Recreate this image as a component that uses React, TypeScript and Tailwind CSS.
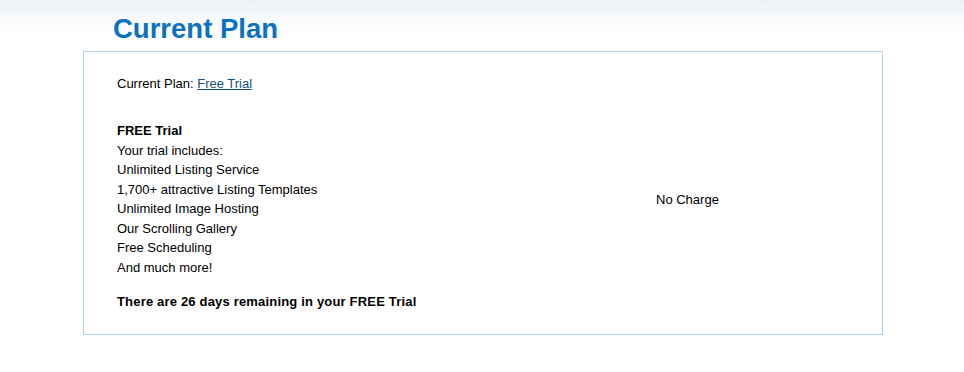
import React from 'react'

const features = [
  'Your trial includes:',
  'Unlimited Listing Service',
  '1,700+ attractive Listing Templates',
  'Unlimited Image Hosting',
  'Our Scrolling Gallery',
  'Free Scheduling',
  'And much more!',
]

export default function App() {
  return (
    <div className="min-h-[372px] bg-[linear-gradient(to_bottom,#eef3f7_0px,#ffffff_34px)] font-['Liberation_Sans',Arial,sans-serif] text-black">
      <h1 className="ml-[113px] pt-[13px] text-[27.5px] leading-[32px] font-bold text-[#0a72c2]">Current Plan</h1>

      {/* plan box */}
      <div className="ml-[83px] mt-[6px] h-[284px] w-[800px] border border-[#aed3ea] border-t-[#b7cfde] bg-white pl-[33px] pt-[22px] text-[13px] leading-[19.5px]">
        <p>
          Current Plan:{' '}
          <a href="#" className="text-[#16507e] underline">
            Free Trial
          </a>
        </p>

        <div className="mt-[27.5px] flex">
          <div className="w-[539px]">
            <p className="font-bold">FREE Trial</p>
            {features.map((f) => (
              <p key={f}>{f}</p>
            ))}
          </div>
          <div className="self-center pt-[2px]">No Charge</div>
        </div>

        <p className="mt-[15px] font-bold tracking-[0.18px]">There are 26 days remaining in your FREE Trial</p>
      </div>
    </div>
  )
}
